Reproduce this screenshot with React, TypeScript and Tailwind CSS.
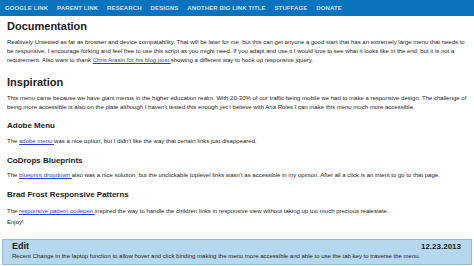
const NAV = ['Google Link', 'Parent Link', 'Research', 'Designs', 'Another Big Link Title', 'Stuffage', 'Donate']

function A({ children }: { children: React.ReactNode }) {
  return <a href="#" className="text-[#2b3ec7] underline">{children}</a>
}

export default function App() {
  return (
    <div className="w-[474px] h-[266px] overflow-hidden bg-white text-[#222] font-['Liberation_Sans',Arial,sans-serif]">
      <nav className="h-[16px] bg-[#0b72bd] flex items-center pl-[5px] gap-[9px]">
        {NAV.map((n) => (
          <a key={n} href="#" className="text-[6px] font-bold uppercase tracking-[0.1px] text-[#c9e2f5] leading-none">
            {n}
          </a>
        ))}
      </nav>

      <div className="px-[7px]">
        <h2 className="text-[11px] font-bold mt-[3px] leading-[14px]">Documentation</h2>
        <p className="text-[6px] leading-[9px] mt-[5px]">
          Realtively Untested as far as browser and device compatability. That will be later for me, but this can get anyone a good start that has an extremely large menu that needs to be responsive. I encourage forking and feel free to use this script as you might need. If you adapt and use it I would love to see what it looks like in the end, but it is not a requirement. Also want to thank <A>Chris Arasin for his blog post </A>showing a different way to hook up responsive jquery.
        </p>

        <h2 className="text-[11px] font-bold mt-[10px] leading-[14px]">Inspiration</h2>
        <p className="text-[6px] leading-[9px] mt-[5px]">
          This menu came because we have giant menus in the higher education realm. With 20-30% of our traffic being mobile we had to make a responsive design. The challenge of being more accessible is also on the plate although I haven't tested this enough yet I believe with Aria Roles I can make this menu much more accessible.
        </p>

        <h4 className="text-[8px] font-bold mt-[9px] leading-[10px]">Adobe Menu</h4>
        <p className="text-[6px] leading-[9px] mt-[6px]">
          The <A>adobe menu </A>was a nice option, but I didn't like the way that certain links just disappeared.
        </p>

        <h4 className="text-[8px] font-bold mt-[10px] leading-[10px]">CoDrops Blueprints</h4>
        <p className="text-[6px] leading-[9px] mt-[5px]">
          The <A>blueprint dropdown </A>also was a nice solution, but the unclickable toplevel links wasn't as accessible in my opinion. After all a click is an intent to go to that page.
        </p>

        <h4 className="text-[8px] font-bold mt-[10px] leading-[10px]">Brad Frost Responsive Patterns</h4>
        <p className="text-[6px] leading-[9px] mt-[7px]">
          The <A>responsive pattern codepen </A>inspired the way to handle the children links in responsive view without taking up too much precious realestate.
        </p>
        <p className="text-[6px] leading-[9px] mt-[2px]">Enjoy!</p>
      </div>

      <div className="mx-[2px] mt-[12px] h-[26px] bg-[#b5d8ef] border border-[#8dbcdd] px-[9px] pt-[1px]">
        <div className="flex justify-between items-center">
          <span className="text-[9px] font-bold leading-[11px]">Edit</span>
          <span className="text-[8px] font-bold leading-[11px] pr-[1px]">12.23.2013</span>
        </div>
        <p className="text-[6px] leading-[9px]">
          Recent Change in the laptop function to allow hover and click binding making the menu more accessible and able to use the tab key to traverse the menu.
        </p>
      </div>
    </div>
  )
}
